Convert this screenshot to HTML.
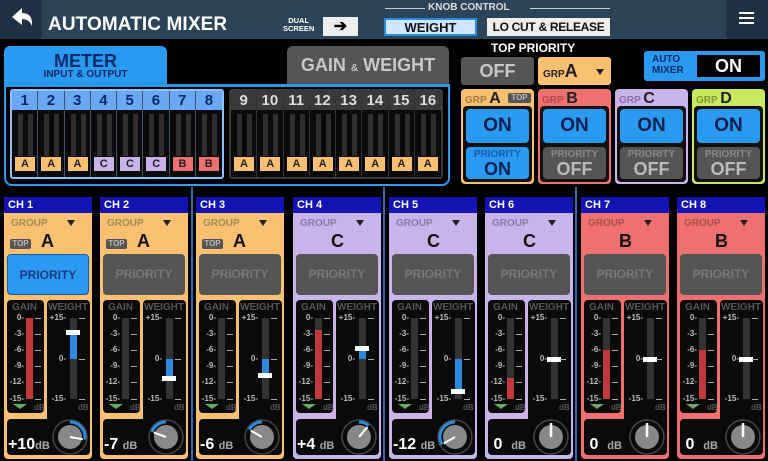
<!DOCTYPE html>
<html><head><meta charset="utf-8"><style>
*{box-sizing:border-box;margin:0;padding:0}
body{width:768px;height:461px;background:#000;font-family:"Liberation Sans",sans-serif;font-weight:bold;position:relative;overflow:hidden;color:#fff}
.a{position:absolute;white-space:nowrap}
.hdr{left:0;top:0;width:768px;height:39px;background:#2c4458}
.back{left:0;top:0;width:42px;height:39px;background:#1f3243}
.menu{left:726px;top:0;width:42px;height:39px;background:#1f3243}
.tab{border-radius:6px 6px 0 0;text-align:center}
.mbox{display:flex}
.col{position:relative;width:26.5px;height:100%}
.num{height:19px;text-align:center;font-size:15px;line-height:20px}
.bars{position:absolute;top:23px;left:6px;width:15px;height:42px;border-left:5px solid #2e2e2e;border-right:5px solid #2e2e2e}
.bd{position:absolute;left:3px;top:66px;width:20px;height:14px;font-size:11px;line-height:14px;text-align:center;color:#222}
.oa{background:#f8c070}.oc{background:#c8b4e8}.ob{background:#f07070}
.st{position:absolute;top:197px;width:88px;height:262px}
.st .h{position:absolute;left:0;top:0;width:88px;height:16px;background:#1414b4;font-size:11px;line-height:16px;padding-left:4px}
.st .b{position:absolute;left:0;top:16px;width:88px;height:246px;border-radius:0 0 4px 4px}
.gl{position:absolute;left:7px;top:21px;font-size:10px;color:#a08a5a}
.tri{position:absolute;left:63px;top:23px;width:0;height:0;border-left:4px solid transparent;border-right:4px solid transparent;border-top:6px solid #222}
.tp{position:absolute;left:6px;top:42px;width:21px;height:10px;background:#555;color:#bbb;font-size:8px;line-height:10px;text-align:center;border-radius:2px}
.lt{position:absolute;left:37px;top:34px;font-size:18px;color:#111}
.pr{position:absolute;left:3px;top:57px;width:82px;height:41px;border-radius:4px;background:#555;color:#777;font-size:12px;line-height:41px;text-align:center}
.pr.on{background:#2a9af0;color:#1a3a80;border:1px solid #1a5aa0}
.blk{position:absolute;background:#0a0a0a;border-radius:4px}
.gb{left:3px;top:103px;width:37px;height:113px}
.wb{left:43px;top:103px;width:43px;height:130px}
.kb{left:3px;top:222px;width:83px;height:36px}
.lb{position:absolute;top:105px;font-size:10px;color:#555}
.bar{position:absolute;top:121px;width:7px;height:81px;background:#333}
.fill{position:absolute;width:7px}
.tk{position:absolute;font-size:8px;color:#bbb;text-align:right;width:20px;line-height:8px}
.ln{position:absolute;height:1px;background:#aaa;width:6px}
.hd{position:absolute;left:62px;width:14px;height:5px;background:#fff}
.db{position:absolute;font-size:8px;color:#555}
.gt{position:absolute;left:9px;top:207px;width:0;height:0;border-left:7px solid transparent;border-right:7px solid transparent;border-top:5px solid #6a6}
.val{position:absolute;left:4px;top:239px;font-size:16px;line-height:18px;white-space:nowrap}
.val span{font-size:11px;color:#aaa}
.kn{position:absolute;left:46px;top:220px}
.dv{position:absolute;top:187px;width:2px;height:274px;background:#2a6ab0}
.gx{position:absolute;top:89px;width:73px;height:95px;border-radius:4px}
.gx .t{position:absolute;left:4px;top:1px;font-size:10px;color:#a07a40}
.gx .t b{font-size:16px;color:#222}
.gx .in{position:absolute;left:2px;top:17px;width:69px;height:76px;background:#111;border-radius:4px}
.onb{position:absolute;left:3px;top:3px;width:63px;height:34px;background:#2a9af0;border-radius:4px;color:#0a2050;font-size:19px;text-align:center;line-height:34px}
.pb{position:absolute;left:3px;top:41px;width:63px;height:32px;border-radius:4px;background:#555;text-align:center;color:#888;font-size:10px;line-height:11px;padding-top:2px}
.pb b{display:block;font-size:18px;line-height:18px;color:#bbb}
.pb.on{background:#2a9af0;color:#1a5ab0}.pb.on b{color:#0a2050}
</style></head><body>
<div class="a hdr"></div>
<div class="a back"><svg width="42" height="39"><path d="M12 17 L22 8 L22 13 Q33 13 32 26 Q29 19 22 19 L22 25 Z" fill="#fff"/></svg></div>
<div class="a" style="left:48px;top:14px;font-size:19px;letter-spacing:0.1px">AUTOMATIC MIXER</div>
<div class="a" style="left:283px;top:17px;font-size:7.5px;line-height:8px;text-align:center;color:#fff">DUAL<br>SCREEN</div>
<div class="a" style="left:323px;top:17px;width:35px;height:19px;background:#eee;color:#000;font-size:16px;text-align:center;line-height:19px">➔</div>
<div class="a" style="left:385px;top:8px;width:40px;height:1px;background:#ccc"></div>
<div class="a" style="left:428px;top:2px;font-size:10px;color:#ddd">KNOB CONTROL</div>
<div class="a" style="left:530px;top:8px;width:80px;height:1px;background:#ccc"></div>
<div class="a" style="left:384px;top:18px;width:93px;height:18px;background:#cfe6ff;border:2px solid #2a8ae0;color:#111;font-size:13px;text-align:center;line-height:15px">WEIGHT</div>
<div class="a" style="left:487px;top:18px;width:123px;height:18px;background:#eee;color:#111;font-size:12px;letter-spacing:-0.3px;text-align:center;line-height:18px">LO CUT &amp; RELEASE</div>
<div class="a menu"><div class="a" style="left:13px;top:12px;width:15px;height:2px;background:#fff;box-shadow:0 5px 0 #fff,0 10px 0 #fff"></div></div>

<div class="a tab" style="left:4px;top:46px;width:163px;height:40px;background:#2a9af0;color:#0a2a6a;font-size:18px;line-height:18px;padding-top:6px">METER<div style="font-size:10px;line-height:10px">INPUT &amp; OUTPUT</div></div>
<div class="a tab" style="left:287px;top:46px;width:162px;height:38px;background:#555;color:#c8c8c8;font-size:18px;line-height:38px">GAIN <span style="font-size:10px">&amp;</span> WEIGHT</div>
<div class="a" style="left:4px;top:84px;width:446px;height:102px;border:2px solid #2a9af0;border-top:none;border-radius:0 0 8px 8px"></div>
<div class="a" style="left:4px;top:84px;width:446px;height:3px;background:#2a9af0"></div>

<div class="a mbox" style="left:10px;top:89px;width:214px;height:90px;background:#0a0a0a;border:2px solid #8cc0ff;border-radius:3px">
<div class="col" style="border-right:1px solid #456"><div class="num" style="background:#6aa8f4;color:#0a2a6a">1</div><div class="bars"></div><div class="bd oa">A</div></div>
<div class="col" style="border-right:1px solid #456"><div class="num" style="background:#6aa8f4;color:#0a2a6a">2</div><div class="bars"></div><div class="bd oa">A</div></div>
<div class="col" style="border-right:1px solid #456"><div class="num" style="background:#6aa8f4;color:#0a2a6a">3</div><div class="bars"></div><div class="bd oa">A</div></div>
<div class="col" style="border-right:1px solid #456"><div class="num" style="background:#6aa8f4;color:#0a2a6a">4</div><div class="bars"></div><div class="bd oc">C</div></div>
<div class="col" style="border-right:1px solid #456"><div class="num" style="background:#6aa8f4;color:#0a2a6a">5</div><div class="bars"></div><div class="bd oc">C</div></div>
<div class="col" style="border-right:1px solid #456"><div class="num" style="background:#6aa8f4;color:#0a2a6a">6</div><div class="bars"></div><div class="bd oc">C</div></div>
<div class="col" style="border-right:1px solid #456"><div class="num" style="background:#6aa8f4;color:#0a2a6a">7</div><div class="bars"></div><div class="bd ob">B</div></div>
<div class="col"><div class="num" style="background:#6aa8f4;color:#0a2a6a">8</div><div class="bars"></div><div class="bd ob">B</div></div>
</div>
<div class="a mbox" style="left:229px;top:89px;width:214px;height:90px;background:#0a0a0a;border:2px solid #3a3a3a;border-radius:3px">
<div class="col" style="border-right:1px solid #333"><div class="num" style="background:#3a3a3a;color:#ddd">9</div><div class="bars"></div><div class="bd oa">A</div></div>
<div class="col" style="border-right:1px solid #333"><div class="num" style="background:#3a3a3a;color:#ddd">10</div><div class="bars"></div><div class="bd oa">A</div></div>
<div class="col" style="border-right:1px solid #333"><div class="num" style="background:#3a3a3a;color:#ddd">11</div><div class="bars"></div><div class="bd oa">A</div></div>
<div class="col" style="border-right:1px solid #333"><div class="num" style="background:#3a3a3a;color:#ddd">12</div><div class="bars"></div><div class="bd oa">A</div></div>
<div class="col" style="border-right:1px solid #333"><div class="num" style="background:#3a3a3a;color:#ddd">13</div><div class="bars"></div><div class="bd oa">A</div></div>
<div class="col" style="border-right:1px solid #333"><div class="num" style="background:#3a3a3a;color:#ddd">14</div><div class="bars"></div><div class="bd oa">A</div></div>
<div class="col" style="border-right:1px solid #333"><div class="num" style="background:#3a3a3a;color:#ddd">15</div><div class="bars"></div><div class="bd oa">A</div></div>
<div class="col"><div class="num" style="background:#3a3a3a;color:#ddd">16</div><div class="bars"></div><div class="bd oa">A</div></div>
</div>

<div class="a" style="left:491px;top:41px;font-size:12px">TOP PRIORITY</div>
<div class="a" style="left:461px;top:57px;width:73px;height:28px;background:#555;border-radius:3px;color:#c8c8c8;font-size:18px;text-align:center;line-height:28px">OFF</div>
<div class="a oa" style="left:538px;top:57px;width:73px;height:28px;border-radius:3px;color:#222;font-size:10px;line-height:28px;padding-left:5px">GRP<span style="font-size:18px">A</span></div>
<div class="a tri" style="left:596px;top:69px"></div>
<div class="a" style="left:644px;top:51px;width:121px;height:30px;background:#2a9af0;border-radius:3px"></div>
<div class="a" style="left:652px;top:54px;font-size:10px;line-height:11px;color:#0a2a6a">AUTO<br>MIXER</div>
<div class="a" style="left:697px;top:55px;width:63px;height:22px;background:#000;font-size:18px;line-height:22px;text-align:center">ON</div>

<div class="gx oa" style="left:461px"><div class="t">GRP <b>A</b></div><div class="a" style="left:47px;top:4px;width:23px;height:10px;background:#555;color:#bbb;font-size:8px;line-height:10px;text-align:center;border-radius:2px">TOP</div><div class="in"><div class="onb">ON</div><div class="pb on">PRIORITY<b>ON</b></div></div></div>
<div class="gx ob" style="left:538px"><div class="t" style="color:#b04848">GRP <b>B</b></div><div class="in"><div class="onb">ON</div><div class="pb">PRIORITY<b>OFF</b></div></div></div>
<div class="gx oc" style="left:615px"><div class="t" style="color:#8a70a8">GRP <b>C</b></div><div class="in"><div class="onb">ON</div><div class="pb">PRIORITY<b>OFF</b></div></div></div>
<div class="gx" style="left:692px;background:#c8e860"><div class="t" style="color:#7a9a30">GRP <b>D</b></div><div class="in"><div class="onb">ON</div><div class="pb">PRIORITY<b>OFF</b></div></div></div>

<div class="dv" style="left:191px"></div><div class="dv" style="left:383px"></div><div class="dv" style="left:575px"></div>

<div class="st" style="left:4px"><div class="h">CH 1</div><div class="b oa"></div><div class="gl">GROUP</div><div class="tri"></div><div class="tp">TOP</div><div class="lt">A</div><div class="pr on">PRIORITY</div>
<div class="blk gb"></div><div class="blk wb"></div><div class="blk kb"></div><div class="lb" style="left:8px">GAIN</div><div class="lb" style="left:44px">WEIGHT</div>
<div class="bar" style="left:22px"></div><div class="fill" style="left:22px;top:121px;height:81px;background:#c03838"></div>
<div class="tk" style="left:0;top:117px">0-</div><div class="tk" style="left:0;top:133px">-3-</div><div class="tk" style="left:0;top:149px">-6-</div><div class="tk" style="left:0;top:165px">-9-</div><div class="tk" style="left:0;top:181px">-12-</div><div class="tk" style="left:0;top:198px">-15-</div>
<div class="ln" style="left:31px;top:121px"></div><div class="ln" style="left:31px;top:137px"></div><div class="ln" style="left:31px;top:153px"></div><div class="ln" style="left:31px;top:169px"></div><div class="ln" style="left:31px;top:185px"></div><div class="ln" style="left:31px;top:202px"></div>
<div class="gt"></div><div class="db" style="left:30px;top:206px">dB</div>
<div class="bar" style="left:66px"></div><div class="fill" style="left:66px;top:135px;height:27px;background:#2a8ae0"></div><div class="hd" style="top:133px"></div>
<div class="tk" style="left:42px;top:117px">+15-</div><div class="tk" style="left:42px;top:158px">0-</div><div class="tk" style="left:42px;top:198px">-15-</div><div class="ln" style="left:75px;top:121px"></div><div class="ln" style="left:75px;top:162px"></div><div class="ln" style="left:75px;top:202px"></div><div class="db" style="left:74px;top:206px">dB</div>
<svg class="kn" width="40" height="40"><circle cx="20" cy="20" r="17" fill="none" stroke="#444" stroke-width="1.5"/><circle cx="20" cy="20" r="12" fill="#888"/><path d="M20 5 A15 15 0 0 1 34.77 22.6" fill="none" stroke="#2a8ae0" stroke-width="3"/><line x1="20" y1="20" x2="32.8" y2="22.3" stroke="#fff" stroke-width="2"/></svg>
<div class="val">+10<span>dB</span></div></div>

<div class="st" style="left:100px"><div class="h">CH 2</div><div class="b oa"></div><div class="gl">GROUP</div><div class="tri"></div><div class="tp">TOP</div><div class="lt">A</div><div class="pr">PRIORITY</div>
<div class="blk gb"></div><div class="blk wb"></div><div class="blk kb"></div><div class="lb" style="left:8px">GAIN</div><div class="lb" style="left:44px">WEIGHT</div>
<div class="bar" style="left:22px"></div>
<div class="tk" style="left:0;top:117px">0-</div><div class="tk" style="left:0;top:133px">-3-</div><div class="tk" style="left:0;top:149px">-6-</div><div class="tk" style="left:0;top:165px">-9-</div><div class="tk" style="left:0;top:181px">-12-</div><div class="tk" style="left:0;top:198px">-15-</div>
<div class="ln" style="left:31px;top:121px"></div><div class="ln" style="left:31px;top:137px"></div><div class="ln" style="left:31px;top:153px"></div><div class="ln" style="left:31px;top:169px"></div><div class="ln" style="left:31px;top:185px"></div><div class="ln" style="left:31px;top:202px"></div>
<div class="gt"></div><div class="db" style="left:30px;top:206px">dB</div>
<div class="bar" style="left:66px"></div><div class="fill" style="left:66px;top:162px;height:19px;background:#2a8ae0"></div><div class="hd" style="top:179px"></div>
<div class="tk" style="left:42px;top:117px">+15-</div><div class="tk" style="left:42px;top:158px">0-</div><div class="tk" style="left:42px;top:198px">-15-</div><div class="ln" style="left:75px;top:121px"></div><div class="ln" style="left:75px;top:162px"></div><div class="ln" style="left:75px;top:202px"></div><div class="db" style="left:74px;top:206px">dB</div>
<svg class="kn" width="40" height="40"><circle cx="20" cy="20" r="17" fill="none" stroke="#444" stroke-width="1.5"/><circle cx="20" cy="20" r="12" fill="#888"/><path d="M20 5 A15 15 0 0 0 5.9 14.87" fill="none" stroke="#2a8ae0" stroke-width="3"/><line x1="20" y1="20" x2="7.8" y2="15.5" stroke="#fff" stroke-width="2"/></svg>
<div class="val">-7 <span>dB</span></div></div>

<div class="st" style="left:196px"><div class="h">CH 3</div><div class="b oa"></div><div class="gl">GROUP</div><div class="tri"></div><div class="tp">TOP</div><div class="lt">A</div><div class="pr">PRIORITY</div>
<div class="blk gb"></div><div class="blk wb"></div><div class="blk kb"></div><div class="lb" style="left:8px">GAIN</div><div class="lb" style="left:44px">WEIGHT</div>
<div class="bar" style="left:22px"></div>
<div class="tk" style="left:0;top:117px">0-</div><div class="tk" style="left:0;top:133px">-3-</div><div class="tk" style="left:0;top:149px">-6-</div><div class="tk" style="left:0;top:165px">-9-</div><div class="tk" style="left:0;top:181px">-12-</div><div class="tk" style="left:0;top:198px">-15-</div>
<div class="ln" style="left:31px;top:121px"></div><div class="ln" style="left:31px;top:137px"></div><div class="ln" style="left:31px;top:153px"></div><div class="ln" style="left:31px;top:169px"></div><div class="ln" style="left:31px;top:185px"></div><div class="ln" style="left:31px;top:202px"></div>
<div class="gt"></div><div class="db" style="left:30px;top:206px">dB</div>
<div class="bar" style="left:66px"></div><div class="fill" style="left:66px;top:162px;height:16px;background:#2a8ae0"></div><div class="hd" style="top:176px"></div>
<div class="tk" style="left:42px;top:117px">+15-</div><div class="tk" style="left:42px;top:158px">0-</div><div class="tk" style="left:42px;top:198px">-15-</div><div class="ln" style="left:75px;top:121px"></div><div class="ln" style="left:75px;top:162px"></div><div class="ln" style="left:75px;top:202px"></div><div class="db" style="left:74px;top:206px">dB</div>
<svg class="kn" width="40" height="40"><circle cx="20" cy="20" r="17" fill="none" stroke="#444" stroke-width="1.5"/><circle cx="20" cy="20" r="12" fill="#888"/><path d="M20 5 A15 15 0 0 0 7 12.5" fill="none" stroke="#2a8ae0" stroke-width="3"/><line x1="20" y1="20" x2="8.7" y2="13.5" stroke="#fff" stroke-width="2"/></svg>
<div class="val">-6 <span>dB</span></div></div>

<div class="st" style="left:293px"><div class="h">CH 4</div><div class="b oc"></div><div class="gl" style="color:#8a78a8">GROUP</div><div class="tri"></div><div class="lt" style="left:38px">C</div><div class="pr">PRIORITY</div>
<div class="blk gb"></div><div class="blk wb"></div><div class="blk kb"></div><div class="lb" style="left:8px">GAIN</div><div class="lb" style="left:44px">WEIGHT</div>
<div class="bar" style="left:22px"></div><div class="fill" style="left:22px;top:133px;height:69px;background:#c03838"></div>
<div class="tk" style="left:0;top:117px">0-</div><div class="tk" style="left:0;top:133px">-3-</div><div class="tk" style="left:0;top:149px">-6-</div><div class="tk" style="left:0;top:165px">-9-</div><div class="tk" style="left:0;top:181px">-12-</div><div class="tk" style="left:0;top:198px">-15-</div>
<div class="ln" style="left:31px;top:121px"></div><div class="ln" style="left:31px;top:137px"></div><div class="ln" style="left:31px;top:153px"></div><div class="ln" style="left:31px;top:169px"></div><div class="ln" style="left:31px;top:185px"></div><div class="ln" style="left:31px;top:202px"></div>
<div class="gt"></div><div class="db" style="left:30px;top:206px">dB</div>
<div class="bar" style="left:66px"></div><div class="fill" style="left:66px;top:151px;height:11px;background:#2a8ae0"></div><div class="hd" style="top:149px"></div>
<div class="tk" style="left:42px;top:117px">+15-</div><div class="tk" style="left:42px;top:158px">0-</div><div class="tk" style="left:42px;top:198px">-15-</div><div class="ln" style="left:75px;top:121px"></div><div class="ln" style="left:75px;top:162px"></div><div class="ln" style="left:75px;top:202px"></div><div class="db" style="left:74px;top:206px">dB</div>
<svg class="kn" width="40" height="40"><circle cx="20" cy="20" r="17" fill="none" stroke="#444" stroke-width="1.5"/><circle cx="20" cy="20" r="12" fill="#888"/><path d="M20 5 A15 15 0 0 1 29.6 8.5" fill="none" stroke="#2a8ae0" stroke-width="3"/><line x1="20" y1="20" x2="28.4" y2="10" stroke="#fff" stroke-width="2"/></svg>
<div class="val">+4 <span>dB</span></div></div>

<div class="st" style="left:389px"><div class="h">CH 5</div><div class="b oc"></div><div class="gl" style="color:#8a78a8">GROUP</div><div class="tri"></div><div class="lt" style="left:38px">C</div><div class="pr">PRIORITY</div>
<div class="blk gb"></div><div class="blk wb"></div><div class="blk kb"></div><div class="lb" style="left:8px">GAIN</div><div class="lb" style="left:44px">WEIGHT</div>
<div class="bar" style="left:22px"></div>
<div class="tk" style="left:0;top:117px">0-</div><div class="tk" style="left:0;top:133px">-3-</div><div class="tk" style="left:0;top:149px">-6-</div><div class="tk" style="left:0;top:165px">-9-</div><div class="tk" style="left:0;top:181px">-12-</div><div class="tk" style="left:0;top:198px">-15-</div>
<div class="ln" style="left:31px;top:121px"></div><div class="ln" style="left:31px;top:137px"></div><div class="ln" style="left:31px;top:153px"></div><div class="ln" style="left:31px;top:169px"></div><div class="ln" style="left:31px;top:185px"></div><div class="ln" style="left:31px;top:202px"></div>
<div class="gt"></div><div class="db" style="left:30px;top:206px">dB</div>
<div class="bar" style="left:66px"></div><div class="fill" style="left:66px;top:162px;height:32px;background:#2a8ae0"></div><div class="hd" style="top:192px"></div>
<div class="tk" style="left:42px;top:117px">+15-</div><div class="tk" style="left:42px;top:158px">0-</div><div class="tk" style="left:42px;top:198px">-15-</div><div class="ln" style="left:75px;top:121px"></div><div class="ln" style="left:75px;top:162px"></div><div class="ln" style="left:75px;top:202px"></div><div class="db" style="left:74px;top:206px">dB</div>
<svg class="kn" width="40" height="40"><circle cx="20" cy="20" r="17" fill="none" stroke="#444" stroke-width="1.5"/><circle cx="20" cy="20" r="12" fill="#888"/><path d="M20 5 A15 15 0 0 0 7 27.5" fill="none" stroke="#2a8ae0" stroke-width="3"/><line x1="20" y1="20" x2="8.7" y2="26.5" stroke="#fff" stroke-width="2"/></svg>
<div class="val">-12 <span>dB</span></div></div>

<div class="st" style="left:485px"><div class="h">CH 6</div><div class="b oc"></div><div class="gl" style="color:#8a78a8">GROUP</div><div class="tri"></div><div class="lt" style="left:38px">C</div><div class="pr">PRIORITY</div>
<div class="blk gb"></div><div class="blk wb"></div><div class="blk kb"></div><div class="lb" style="left:8px">GAIN</div><div class="lb" style="left:44px">WEIGHT</div>
<div class="bar" style="left:22px"></div><div class="fill" style="left:22px;top:181px;height:21px;background:#c03838"></div>
<div class="tk" style="left:0;top:117px">0-</div><div class="tk" style="left:0;top:133px">-3-</div><div class="tk" style="left:0;top:149px">-6-</div><div class="tk" style="left:0;top:165px">-9-</div><div class="tk" style="left:0;top:181px">-12-</div><div class="tk" style="left:0;top:198px">-15-</div>
<div class="ln" style="left:31px;top:121px"></div><div class="ln" style="left:31px;top:137px"></div><div class="ln" style="left:31px;top:153px"></div><div class="ln" style="left:31px;top:169px"></div><div class="ln" style="left:31px;top:185px"></div><div class="ln" style="left:31px;top:202px"></div>
<div class="gt"></div><div class="db" style="left:30px;top:206px">dB</div>
<div class="bar" style="left:66px"></div><div class="hd" style="top:160px"></div>
<div class="tk" style="left:42px;top:117px">+15-</div><div class="tk" style="left:42px;top:158px">0-</div><div class="tk" style="left:42px;top:198px">-15-</div><div class="ln" style="left:75px;top:121px"></div><div class="ln" style="left:75px;top:162px"></div><div class="ln" style="left:75px;top:202px"></div><div class="db" style="left:74px;top:206px">dB</div>
<svg class="kn" width="40" height="40"><circle cx="20" cy="20" r="17" fill="none" stroke="#444" stroke-width="1.5"/><circle cx="20" cy="20" r="12" fill="#888"/><line x1="20" y1="20" x2="20" y2="6" stroke="#fff" stroke-width="2.5"/></svg>
<div class="val">&nbsp;0 &nbsp;<span>dB</span></div></div>

<div class="st" style="left:581px"><div class="h">CH 7</div><div class="b ob"></div><div class="gl" style="color:#a85050">GROUP</div><div class="tri"></div><div class="lt" style="left:38px">B</div><div class="pr">PRIORITY</div>
<div class="blk gb"></div><div class="blk wb"></div><div class="blk kb"></div><div class="lb" style="left:8px">GAIN</div><div class="lb" style="left:44px">WEIGHT</div>
<div class="bar" style="left:22px"></div><div class="fill" style="left:22px;top:153px;height:49px;background:#c03838"></div>
<div class="tk" style="left:0;top:117px">0-</div><div class="tk" style="left:0;top:133px">-3-</div><div class="tk" style="left:0;top:149px">-6-</div><div class="tk" style="left:0;top:165px">-9-</div><div class="tk" style="left:0;top:181px">-12-</div><div class="tk" style="left:0;top:198px">-15-</div>
<div class="ln" style="left:31px;top:121px"></div><div class="ln" style="left:31px;top:137px"></div><div class="ln" style="left:31px;top:153px"></div><div class="ln" style="left:31px;top:169px"></div><div class="ln" style="left:31px;top:185px"></div><div class="ln" style="left:31px;top:202px"></div>
<div class="gt"></div><div class="db" style="left:30px;top:206px">dB</div>
<div class="bar" style="left:66px"></div><div class="hd" style="top:160px"></div>
<div class="tk" style="left:42px;top:117px">+15-</div><div class="tk" style="left:42px;top:158px">0-</div><div class="tk" style="left:42px;top:198px">-15-</div><div class="ln" style="left:75px;top:121px"></div><div class="ln" style="left:75px;top:162px"></div><div class="ln" style="left:75px;top:202px"></div><div class="db" style="left:74px;top:206px">dB</div>
<svg class="kn" width="40" height="40"><circle cx="20" cy="20" r="17" fill="none" stroke="#444" stroke-width="1.5"/><circle cx="20" cy="20" r="12" fill="#888"/><line x1="20" y1="20" x2="20" y2="6" stroke="#fff" stroke-width="2.5"/></svg>
<div class="val">&nbsp;0 &nbsp;<span>dB</span></div></div>

<div class="st" style="left:677px"><div class="h">CH 8</div><div class="b ob"></div><div class="gl" style="color:#a85050">GROUP</div><div class="tri"></div><div class="lt" style="left:38px">B</div><div class="pr">PRIORITY</div>
<div class="blk gb"></div><div class="blk wb"></div><div class="blk kb"></div><div class="lb" style="left:8px">GAIN</div><div class="lb" style="left:44px">WEIGHT</div>
<div class="bar" style="left:22px"></div><div class="fill" style="left:22px;top:153px;height:49px;background:#c03838"></div>
<div class="tk" style="left:0;top:117px">0-</div><div class="tk" style="left:0;top:133px">-3-</div><div class="tk" style="left:0;top:149px">-6-</div><div class="tk" style="left:0;top:165px">-9-</div><div class="tk" style="left:0;top:181px">-12-</div><div class="tk" style="left:0;top:198px">-15-</div>
<div class="ln" style="left:31px;top:121px"></div><div class="ln" style="left:31px;top:137px"></div><div class="ln" style="left:31px;top:153px"></div><div class="ln" style="left:31px;top:169px"></div><div class="ln" style="left:31px;top:185px"></div><div class="ln" style="left:31px;top:202px"></div>
<div class="gt"></div><div class="db" style="left:30px;top:206px">dB</div>
<div class="bar" style="left:66px"></div><div class="hd" style="top:160px"></div>
<div class="tk" style="left:42px;top:117px">+15-</div><div class="tk" style="left:42px;top:158px">0-</div><div class="tk" style="left:42px;top:198px">-15-</div><div class="ln" style="left:75px;top:121px"></div><div class="ln" style="left:75px;top:162px"></div><div class="ln" style="left:75px;top:202px"></div><div class="db" style="left:74px;top:206px">dB</div>
<svg class="kn" width="40" height="40"><circle cx="20" cy="20" r="17" fill="none" stroke="#444" stroke-width="1.5"/><circle cx="20" cy="20" r="12" fill="#888"/><line x1="20" y1="20" x2="20" y2="6" stroke="#fff" stroke-width="2.5"/></svg>
<div class="val">&nbsp;0 &nbsp;<span>dB</span></div></div>
</body></html>
